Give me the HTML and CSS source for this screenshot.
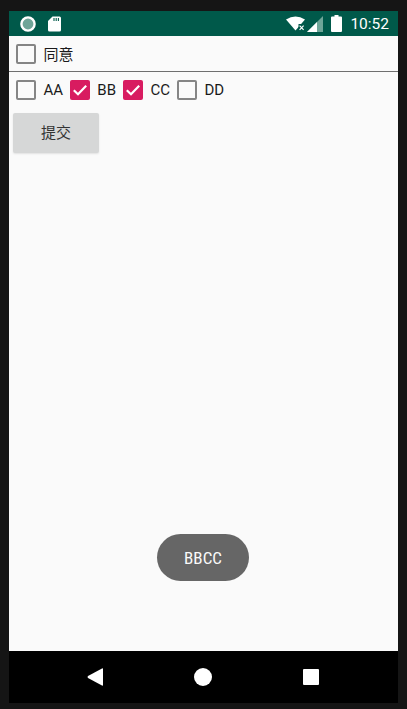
FILE: index.html
```html
<!DOCTYPE html>
<html lang="en">
<head>
    <meta charset="UTF-8">
    <meta name="viewport" content="width=device-width, initial-scale=1.0">
    <title>CheckBox</title>
    <link rel="stylesheet" href="styles.css">
</head>
<body>

    <div class="phone">
        <!-- Status bar -->
        <div class="status-bar">
            <div class="status-left">
                <svg class="icon-record" width="16" height="16" viewBox="0 0 16 16">
                    <circle cx="8" cy="8" r="6.6" fill="#6fa598" stroke="#fff" stroke-width="2.4"/>
                </svg>
                <svg class="icon-sd" width="13" height="16" viewBox="0 0 13 16">
                    <path d="M4.5 0.5H11.5Q13 0.5 13 2V14Q13 15.5 11.5 15.5H1.5Q0 15.5 0 14V5Z" fill="#fff"/>
                    <path d="M6 2V5M8.2 2V5M10.4 2V5" stroke="#00594a" stroke-width="1.1"/>
                </svg>
            </div>
            <div class="status-right">
                <svg class="icon-wifi" width="20" height="15" viewBox="0 0 20 15">
                    <path d="M0 3.5Q9.5 -2.5 19 3.5L9.5 14.5Z" fill="#fff"/>
                    <path d="M12.5 8H20V15H12.5Z" fill="#00594a"/>
                    <path d="M13.6 9.6L17.6 13.8M17.6 9.6L13.6 13.8" stroke="#fff" stroke-width="1.2"/>
                </svg>
                <svg class="icon-signal" width="16" height="16" viewBox="0 0 16 16">
                    <path d="M0 16L16 0V16Z" fill="#6fa598"/>
                    <path d="M0 16L10 6V16Z" fill="#fff"/>
                </svg>
                <svg class="icon-battery" width="11" height="17" viewBox="0 0 11 17">
                    <path d="M3.5 0H7.5V1.5H10Q11 1.5 11 2.5V16Q11 17 10 17H1Q0 17 0 16V2.5Q0 1.5 1 1.5H3.5Z" fill="#fff"/>
                </svg>
                <span class="clock">10:52</span>
            </div>
        </div>

        <!-- Main Content -->
        <div class="content">
            <div class="agree-row">
                <label class="check-item">
                    <span class="box"></span>
                    <span class="check-label">同意</span>
                </label>
            </div>

            <div class="options-row">
                <label class="check-item">
                    <span class="box"></span>
                    <span class="check-label">AA</span>
                </label>
                <label class="check-item">
                    <span class="box checked">
                        <svg width="20" height="20" viewBox="0 0 20 20">
                            <path d="M3.8 10.2L8 14.2L16.2 5.8" fill="none" stroke="#fff" stroke-width="2.2"/>
                        </svg>
                    </span>
                    <span class="check-label">BB</span>
                </label>
                <label class="check-item">
                    <span class="box checked">
                        <svg width="20" height="20" viewBox="0 0 20 20">
                            <path d="M3.8 10.2L8 14.2L16.2 5.8" fill="none" stroke="#fff" stroke-width="2.2"/>
                        </svg>
                    </span>
                    <span class="check-label">CC</span>
                </label>
                <label class="check-item">
                    <span class="box"></span>
                    <span class="check-label">DD</span>
                </label>
            </div>

            <button class="submit-btn">提交</button>

            <div class="toast">BBCC</div>
        </div>

        <!-- Navigation bar -->
        <div class="nav-bar">
            <svg width="16" height="18" viewBox="0 0 16 18">
                <path d="M16 1V17Q16 18 15 17.6L1 10Q0 9 1 8L15 0.4Q16 0 16 1Z" fill="#fff"/>
            </svg>
            <svg width="18" height="18" viewBox="0 0 18 18">
                <circle cx="9" cy="9" r="9" fill="#fff"/>
            </svg>
            <svg width="16" height="16" viewBox="0 0 16 16">
                <rect width="16" height="16" rx="1" fill="#fff"/>
            </svg>
        </div>
    </div>

</body>
</html>
```

FILE: styles.css
```css
body {
    margin: 0;
    padding: 11px 9px 6px;
    height: 709px;
    box-sizing: border-box;
    background-color: #151515;
    font-family: Roboto, "Noto Sans CJK SC", sans-serif;
    overflow: hidden;
}

.phone {
    height: 692px;
    display: flex;
    flex-direction: column;
    background-color: #fafafa;
}

/* Status bar */
.status-bar {
    height: 25px;
    flex-shrink: 0;
    display: flex;
    justify-content: space-between;
    align-items: center;
    background-color: #00594a;
    color: white;
}

.status-left {
    display: flex;
    align-items: center;
    gap: 12px;
    padding-left: 11px;
}

.status-right {
    display: flex;
    align-items: center;
    padding-right: 9px;
}

.icon-signal {
    margin-left: 1px;
}

.icon-battery {
    margin-left: 8px;
}

.clock {
    margin-left: 8px;
    font-size: 15.5px;
}

/* Main Content */
.content {
    flex: 1;
    position: relative;
    display: flex;
    flex-direction: column;
    align-items: flex-start;
}

.agree-row {
    width: 100%;
    height: 36px;
    box-sizing: border-box;
    display: flex;
    align-items: center;
    padding-left: 7px;
    border-bottom: 1px solid #6f6f6f;
}

.options-row {
    display: flex;
    align-items: center;
    height: 36px;
    padding-left: 7px;
}

.check-item {
    display: flex;
    align-items: center;
}

.box {
    width: 20px;
    height: 20px;
    box-sizing: border-box;
    border: 2.6px solid #858585;
    border-radius: 2px;
}

.box.checked {
    border: none;
    background-color: #d81b60;
}

.box svg {
    display: block;
}

.check-label {
    margin-left: 7.4px;
    margin-right: 7px;
    font-size: 15px;
    color: #1a1a1a;
}

.submit-btn {
    width: 86px;
    height: 40px;
    margin-left: 4px;
    margin-top: 5px;
    padding: 0 0 4px;
    border: none;
    border-radius: 2px;
    background-color: #d6d7d7;
    box-shadow: 0 1px 2px rgba(0, 0, 0, 0.1);
    font-family: inherit;
    font-size: 15px;
    color: #333;
}

.toast {
    position: absolute;
    left: 148px;
    top: 498px;
    width: 92px;
    height: 47px;
    display: flex;
    justify-content: center;
    align-items: center;
    border-radius: 24px;
    background-color: #666;
    color: #fafafa;
    font-size: 17px;
    font-family: "Roboto Condensed", Roboto, sans-serif;
}

/* Navigation bar */
.nav-bar {
    height: 52px;
    flex-shrink: 0;
    display: flex;
    justify-content: center;
    align-items: center;
    gap: 91px;
    padding-right: 1px;
    background-color: #000;
}
```
